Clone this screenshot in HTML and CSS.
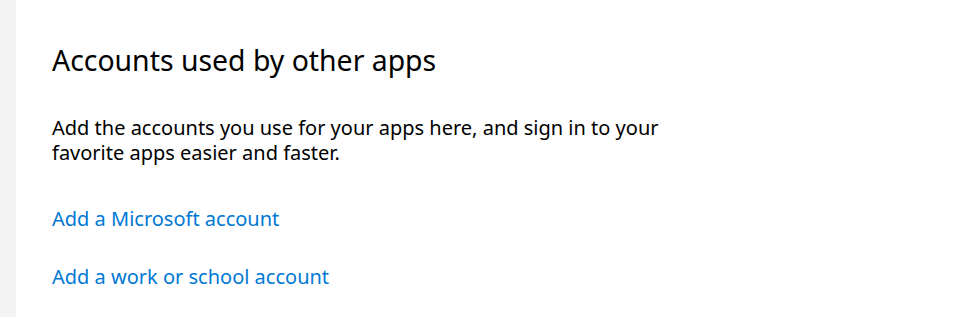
FILE: index.html
```html
<!DOCTYPE html>
<html lang="en">

<head>
	<meta charset="UTF-8">
	<title>Accounts used by other apps</title>
	<link rel="stylesheet" href="styles.css">
</head>

<body>
	<div class="page">
		<div class="sidebar"></div>
		<div class="content">
			<h1>Accounts used by other apps</h1>
			<p class="desc">Add the accounts you use for your apps here, and sign in to your<br>favorite apps easier and faster.</p>
			<a href="#" class="link first">Add a Microsoft account</a>
			<a href="#" class="link">Add a work or school account</a>
		</div>
	</div>
</body>

</html>
```

FILE: styles.css
```css
body {
	margin: 0;
	font-family: 'Noto Sans', 'Open Sans', sans-serif;
	color: #000;
	background-color: white;
}

.page {
	display: flex;
	height: 317px;
	overflow: hidden;
}

.sidebar {
	width: 16px;
	flex-shrink: 0;
	background-color: #f3f3f3;
}

.content {
	display: flex;
	flex-direction: column;
	align-items: flex-start;
	padding: 40px 0 0 36px;
}

h1 {
	font-size: 28.4px;
	font-weight: 400;
	line-height: 40px;
	margin: 0;
}

.desc {
	font-size: 20px;
	line-height: 25px;
	margin: 35px 0 0 0;
}

.link {
	font-size: 20px;
	line-height: 25px;
	color: #0078d4;
	text-decoration: none;
	margin-top: 33px;
}

.link.first {
	margin-top: 41px;
}
```
